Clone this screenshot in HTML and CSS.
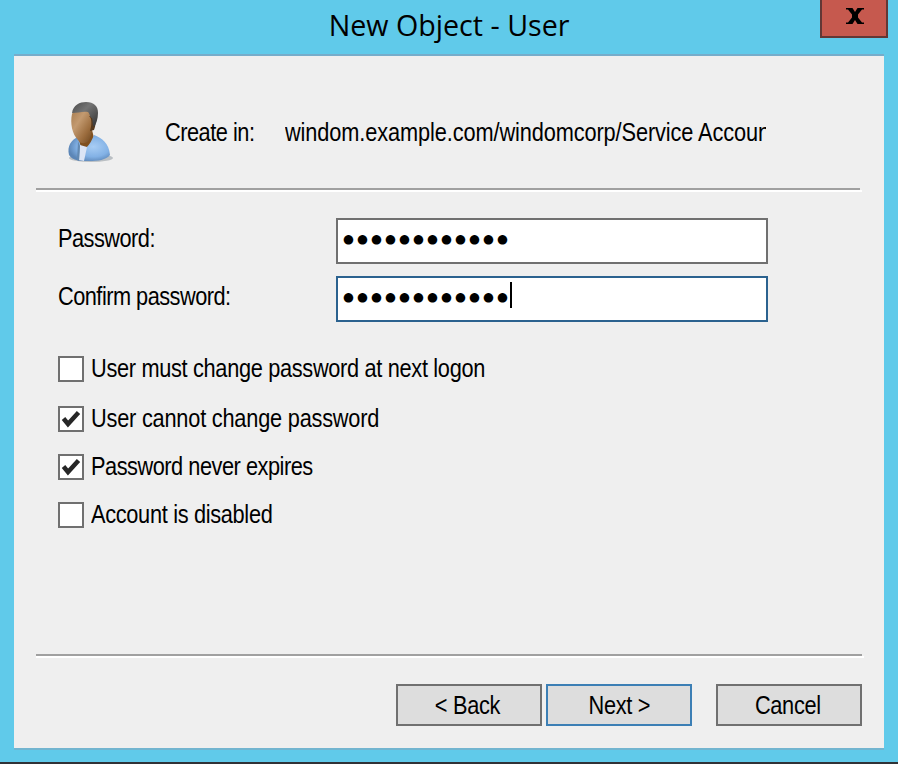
FILE: index.html
```html
<!DOCTYPE html>
<html lang="en">
<head>
<meta charset="utf-8">
<title>New Object - User</title>
<link rel="stylesheet" href="styles.css">
</head>
<body>
<div class="window">
  <header class="titlebar">
    <h1 class="title">New Object - User</h1>
    <button class="close" aria-label="Close">
      <svg width="18" height="16" viewBox="0 0 18 16"><path d="M0 0h6.500L9 4l2.500-4H18v1.500h-2L12 6.500v3l4 5h2V16h-6.500L9 12l-2.500 4H0v-1.500h2l4-5v-3l-4-5H0z"/></svg>
    </button>
  </header>
  <main class="panel">
    <section class="location">
      <svg class="avatar" width="48" height="64" viewBox="0 0 48 64">
        <defs>
          <linearGradient id="face" x1="0" y1="0" x2="1" y2="1"><stop offset="0" stop-color="#a77c4f"/><stop offset=".35" stop-color="#c39a70"/><stop offset=".7" stop-color="#9a6b3c"/><stop offset="1" stop-color="#68431f"/></linearGradient>
          <linearGradient id="hair" x1="0" y1="0" x2="1" y2="1"><stop offset="0" stop-color="#494949"/><stop offset=".4" stop-color="#747474"/><stop offset="1" stop-color="#303030"/></linearGradient>
          <radialGradient id="shirt" cx=".6" cy=".45" r=".6"><stop offset="0" stop-color="#a8cdf4"/><stop offset=".65" stop-color="#82b1e5"/><stop offset="1" stop-color="#5c86b7"/></radialGradient>
        </defs>
        <ellipse cx="24" cy="58" rx="22" ry="4" fill="#a4abb1" opacity=".7"/>
        <path d="M11 34l13-8 3 12-1 12-13 0z" fill="#80501f"/>
        <path d="M2 55C0 46 4 40 11 37l3 10 5 1c4-4 6-8 8-13 8 3 15 8 16 20-4 5-12 6-21 6S6 61 2 55z" fill="url(#shirt)"/>
        <path d="M13 45l7 2-3 14-5-1z" fill="#dce5f5"/>
        <path d="M11 41l2 5-1 15-2-1z" fill="#6389b1"/>
        <path d="M5 14c3-6 19-6 20-1 2 8 1 17-2 25-2 6-9 7-12 2C5 34 3 23 5 14z" fill="url(#face)"/>
        <path d="M22 16c3 2 3 9 1 15l4-1c2-5 2-11 0-14z" fill="#573a1e"/>
        <path d="M5 13C6 5 13 2 19 2c8 0 12 4 12 11 0 6-2 11-4 14-2-2-1-7-2-9-2 0-2-4-4-6-5-1-10 1-16 1z" fill="url(#hair)"/>
      </svg>
      <span class="create"><span class="text t1">Create in:</span></span>
      <span class="path"><span class="text t2">windom.example.com/windomcorp/Service Accoun</span></span>
    </section>
    <div class="rule rule-top"></div>
    <section class="fields">
      <label class="row"><span class="caption"><span class="text t3">Password:</span></span><span class="field"><span class="dots">●●●●●●●●●●●●</span></span></label>
      <label class="row"><span class="caption"><span class="text t3">Confirm password:</span></span><span class="field active"><span class="dots">●●●●●●●●●●●●</span><i class="caret"></i></span></label>
    </section>
    <section class="options">
      <label class="option first"><span class="box"></span><span class="text">User must change password at next logon</span></label>
      <label class="option"><span class="box"><svg width="22" height="22" viewBox="0 0 22 22"><path d="M3.500 10.500L8 16 18.500 4.500" /></svg></span><span class="text t6">User cannot change password</span></label>
      <label class="option"><span class="box"><svg width="22" height="22" viewBox="0 0 22 22"><path d="M3.500 10.500L8 16 18.500 4.500" /></svg></span><span class="text t7">Password never expires</span></label>
      <label class="option"><span class="box"></span><span class="text">Account is disabled</span></label>
    </section>
    <div class="rule rule-bottom"></div>
    <footer class="actions">
      <button class="button"><span class="text">&lt; Back</span></button>
      <button class="button default"><span class="text">Next &gt;</span></button>
      <button class="button cancel"><span class="text">Cancel</span></button>
    </footer>
  </main>
</div>
</body>
</html>
```
FILE: styles.css
```css
* { box-sizing: border-box; }
body { margin: 0; font: 25px/30px "Liberation Sans", Arial, sans-serif; color: #000; }
.window { width: 898px; height: 764px; padding: 0 14px; background: #60caea; border-bottom: 2px solid #303236; }
.titlebar { height: 54px; display: grid; grid-template-columns: 1fr; position: relative; justify-items: center; }
.title { margin: 4px 0 0; font: 400 30px/42px "Open Sans", sans-serif; transform: scaleX(.955); white-space: nowrap; }
.close { position: absolute; top: 0; right: -4px; width: 68px; height: 38px; padding: 8px 0 0 24px; border: 2px solid #633735; border-top: 0; background: #c6594e; display: flex; align-items: flex-start; }
.panel { width: 870px; height: 696px; background: #efefef; border-top: 2px solid #76acca; border-bottom: 2px solid #72b5d0; }
.location { height: 132px; display: flex; align-items: flex-start; padding: 44px 0 0 53px; }
.create { width: 120px; margin: 17px 0 0 50px; white-space: nowrap; }
.path { width: 481px; margin-top: 17px; overflow: hidden; white-space: nowrap; }
.text { display: inline-block; transform: scaleX(.87); transform-origin: left; letter-spacing: -.36px; white-space: nowrap; }
.t1 { letter-spacing: -.55px; }
.t2 { letter-spacing: -.12px; }
.t3 { letter-spacing: -.59px; }
.t6 { letter-spacing: -.24px; }
.t7 { letter-spacing: -.54px; }
.rule { height: 4px; width: 826px; margin-left: 22px; border-bottom: 2px solid #fff; }
.rule::before { content: ""; display: block; height: 2px; margin-right: 2px; background: #a0a0a0; }
.rule-bottom { width: 828px; }
.fields { padding: 26px 0 0 44px; display: flex; flex-direction: column; gap: 12px; }
.row { height: 46px; display: flex; }
.caption { width: 278px; padding-top: 5px; white-space: nowrap; }
.field { width: 432px; height: 46px; border: 2px solid #707070; background: #fff; padding: 4px 0 0 5px; display: flex; align-items: flex-start; }
.active { border-color: #2b628f; }
.dots { width: 167px; font: 12.5px/30px "DejaVu Sans", sans-serif; letter-spacing: 3.1px; white-space: nowrap; }
.caret { width: 2px; height: 26px; background: #000; }
.options { height: 332px; padding: 34px 0 0 44px; }
.option { height: 26px; margin-bottom: 22px; display: flex; gap: 7px; white-space: nowrap; line-height: 25px; }
.first { margin-bottom: 24px; }
.box { width: 26px; height: 26px; border: 2px solid #707070; background: #fff; flex: none; }
.box svg { display: block; }
.box path { fill: none; stroke: #262626; stroke-width: 4.5; }
.actions { display: flex; gap: 4px; padding: 26px 0 0 382px; }
.button { width: 146px; height: 42px; padding: 0 3px 0 0; border: 2px solid #707070; background: #ddd; font: inherit; color: #000; text-align: center; }
.button .text { transform-origin: center; }
.default { border-color: #3c7fb5; padding-right: 0; }
.cancel { margin-left: 20px; }
```
